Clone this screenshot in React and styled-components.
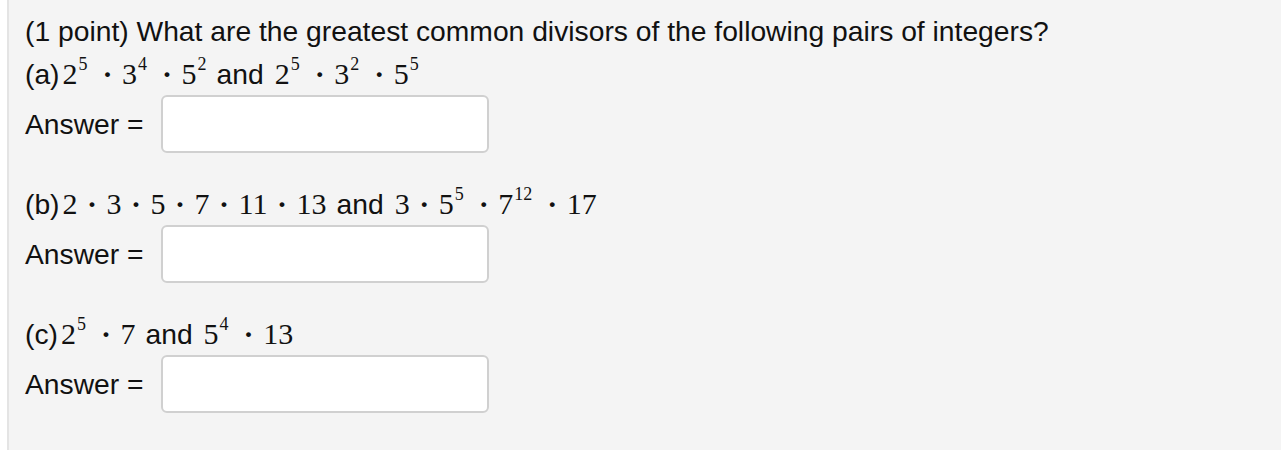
import styled, { createGlobalStyle } from "styled-components";

const GlobalStyle = createGlobalStyle`
    html, body {
        margin: 0;
        padding: 0;
        background: #fff;
    }
    body {
        font-family: "Liberation Sans", Arial, sans-serif;
        color: #111;
    }
`;

const Panel = styled.div`
    margin-left: 7px;
    border-left: 2px solid #e4e4e4;
    background-color: #f4f4f4;
    min-height: 450px;
    box-sizing: border-box;
    padding: 16px 0 0 16px;
`;

const Titulo = styled.div`
    font-size: 28.25px;
    line-height: 30px;
    height: 30px;
    margin-bottom: 13px;
    white-space: nowrap;
`;

const Parte = styled.div`
    margin-bottom: 36px;
`;

const Pergunta = styled.div`
    font-size: 28.25px;
    line-height: 30px;
    height: 30px;
    margin-bottom: 6px;
    white-space: nowrap;
`;

const Mat = styled.span`
    font-family: "Liberation Serif", "Times New Roman", serif;
    font-size: 30px;
    margin-left: ${(p) => (p.$inicio ? "3px" : "0")};
`;

const Sup = styled.span`
    font-size: 18px;
    line-height: 0;
    vertical-align: 14px;
    margin-left: 1px;
`;

const Ponto = styled.span`
    font-weight: 700;
    margin: ${(p) => (p.$aposSup ? "0 9.5px 0 15px" : "0 9.5px")};
`;

const E = styled.span`
    margin: 0 11px 0 10px;
`;

const Linha = styled.div`
    display: flex;
    align-items: center;
    gap: 17px;
    height: 58px;
`;

const Rotulo = styled.span`
    font-size: 28.25px;
`;

const Campo = styled.input`
    box-sizing: border-box;
    width: 328px;
    height: 58px;
    border: 2px solid #d0d0d0;
    border-radius: 6px;
    background: #fff;
    outline: none;
`;

// termos: [base, expoente]
function Produto({ termos, inicio }) {
    return (
        <Mat $inicio={inicio}>
            {termos.map(([base, exp], i) => {
                const anterior = i > 0 ? termos[i - 1] : null;
                return (
                    <span key={i}>
                        {i > 0 && <Ponto $aposSup={!!anterior[1]}>·</Ponto>}
                        {base}
                        {exp && <Sup>{exp}</Sup>}
                    </span>
                );
            })}
        </Mat>
    );
}

const partes = [
    {
        letra: "(a)",
        a: [["2", "5"], ["3", "4"], ["5", "2"]],
        b: [["2", "5"], ["3", "2"], ["5", "5"]],
    },
    {
        letra: "(b)",
        a: [["2"], ["3"], ["5"], ["7"], ["11"], ["13"]],
        b: [["3"], ["5", "5"], ["7", "12"], ["17"]],
    },
    {
        letra: "(c)",
        a: [["2", "5"], ["7"]],
        b: [["5", "4"], ["13"]],
    },
];

export default function App() {
    return (
        <>
            <GlobalStyle />
            <Panel>
                <Titulo>
                    (1 point) What are the greatest common divisors of the following pairs of integers?
                </Titulo>
                {partes.map((p) => (
                    <Parte key={p.letra}>
                        <Pergunta>
                            {p.letra}
                            <Produto termos={p.a} inicio />
                            <E>and</E>
                            <Produto termos={p.b} />
                        </Pergunta>
                        <Linha>
                            <Rotulo>Answer =</Rotulo>
                            <Campo type="text" />
                        </Linha>
                    </Parte>
                ))}
            </Panel>
        </>
    );
}
